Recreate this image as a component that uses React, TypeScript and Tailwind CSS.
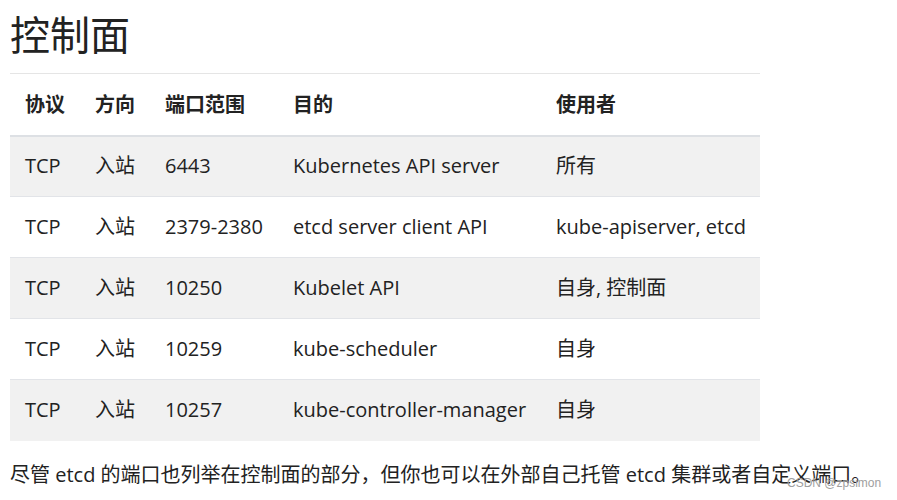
const rows = [
  ["TCP", "入站", "6443", "Kubernetes API server", "所有"],
  ["TCP", "入站", "2379-2380", "etcd server client API", "kube-apiserver, etcd"],
  ["TCP", "入站", "10250", "Kubelet API", "自身, 控制面"],
  ["TCP", "入站", "10259", "kube-scheduler", "自身"],
  ["TCP", "入站", "10257", "kube-controller-manager", "自身"],
];

const headers = ["协议", "方向", "端口范围", "目的", "使用者"];
const widths = ["w-[70px]", "w-[70px]", "w-[128px]", "w-[263px]", "w-[219px]"];

export default function App() {
  return (
    <div className="relative w-[897px] h-[500px] overflow-hidden bg-white text-[#222] font-['Open_Sans','Noto_Sans_CJK_SC',sans-serif]">
      <div className="px-[10px]">
        <h1 className="pt-[5px] h-[73px] text-[40px] leading-[56px] font-normal font-['Noto_Sans_CJK_SC',sans-serif]">
          控制面
        </h1>
        <table className="w-[750px] table-fixed border-collapse text-[20px] border-t border-[#e5e5e5]">
          <thead>
            <tr className="border-b-2 border-[#dde0e4]">
              {headers.map((h, i) => (
                <th
                  key={h}
                  className={`${widths[i]} h-[62px] px-[15px] text-left font-bold align-middle font-['Noto_Sans_CJK_SC',sans-serif]`}
                >
                  {h}
                </th>
              ))}
            </tr>
          </thead>
          <tbody>
            {rows.map((r, i) => (
              <tr
                key={i}
                className={`${i % 2 === 0 ? "bg-[#f1f1f1]" : "bg-white"} ${i < rows.length - 1 ? "border-b border-[#e2e4e8]" : ""}`}
              >
                {r.map((c, j) => (
                  <td key={j} className="h-[61px] px-[15px] align-middle whitespace-nowrap">
                    {c}
                  </td>
                ))}
              </tr>
            ))}
          </tbody>
        </table>
        <p className="mt-[19px] text-[20px] leading-[30px] whitespace-nowrap">
          尽管 etcd 的端口也列举在控制面的部分，但你也可以在外部自己托管 etcd 集群或者自定义端口。
        </p>
      </div>
      <div className="absolute left-[787px] top-[476px] text-[12px] leading-[15px] text-[#a0a0a0] font-['Liberation_Sans',sans-serif]">
        CSDN @zpsimon
      </div>
    </div>
  );
}
